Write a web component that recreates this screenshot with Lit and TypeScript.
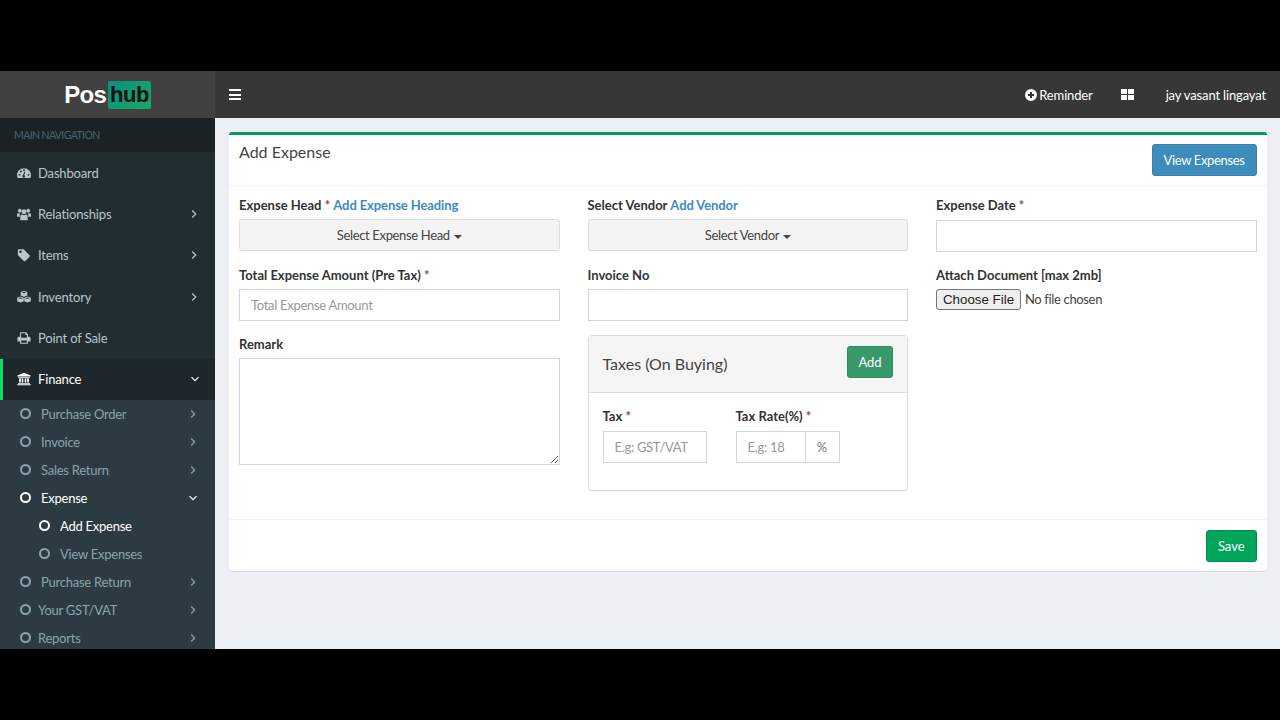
import { LitElement, html, css, svg } from "lit";
import { customElement } from "lit/decorators.js";

const icons: Record<string, unknown> = {
  gauge: svg`<path fill-rule="evenodd" d="M8 2.500C3.600 2.500 0 6 0 10.400c0 1.200.3 2.300.8 3.300h14.400c.5-1 .8-2.100.8-3.300C16 6 12.400 2.500 8 2.500zM2.800 11.200a1.100 1.100 0 1 1 0-2.200 1.100 1.100 0 0 1 0 2.200zM4.500 7.300a1.100 1.100 0 1 1 0-2.200 1.100 1.100 0 0 1 0 2.200zM8 5.600a1.100 1.100 0 1 1 0-2.200 1.100 1.100 0 0 1 0 2.200zM9.300 11.800a1.600 1.600 0 1 1-2.300-1.400l1.500-4 .9.300-1.100 3.900c.5.200 1 .700 1 1.200zM13.200 11.200a1.100 1.100 0 1 1 0-2.200 1.100 1.100 0 0 1 0 2.200z"/>`,
  users: svg`<circle cx="3.200" cy="4.200" r="2.100"/><circle cx="12.800" cy="4.200" r="2.100"/><circle cx="8" cy="5.500" r="2.800"/><path d="M0 11.200V8.800c0-1 .6-1.800 1.600-1.800h2c-.4.500-.6 1.300-.6 2 0 .8.300 1.600.7 2.200H0zM16 11.200V8.800c0-1-.6-1.800-1.600-1.800h-2c.4.500.6 1.300.6 2 0 .8-.3 1.600-.7 2.200H16z"/><path d="M3.800 15v-4c0-1.500.9-2.500 2.200-2.500.6.500 1.200.8 2 .8s1.400-.3 2-.8c1.300 0 2.200 1 2.200 2.500v4H3.800z"/>`,
  tag: svg`<path fill-rule="evenodd" d="M1 2.500v5.200c0 .4.200.7.400 1l6.300 6.200c.5.500 1.300.5 1.800 0l4.800-4.800c.5-.5.500-1.300 0-1.800L8.100 2c-.3-.3-.7-.5-1-.5H2c-.6 0-1 .4-1 1zm3 3.200a1.400 1.400 0 1 1 0-2.800 1.400 1.400 0 0 1 0 2.800z"/>`,
  cubes: svg`<path fill-rule="evenodd" d="M8 .8l3.800 1.500v3.900L8 7.700 4.200 6.200V2.300L8 .8zM5.600 2.900L8 3.800l2.400-.9L8 2 5.600 2.900zM4 7.300l3.700 1.500v4L4 14.300.2 12.800v-4L4 7.300zM1.600 9.400l2.400.9 2.400-.9L4 8.500l-2.400.9zM12 7.300l3.800 1.500v4L12 14.300l-3.700-1.500v-4L12 7.300zM9.600 9.400l2.400.9 2.400-.9-2.400-.9-2.400.9z"/>`,
  print: svg`<path fill-rule="evenodd" d="M3.500 1.500h6.800l2.200 2.200v2.800h1.300c.9 0 1.700.7 1.700 1.600v4h-3v2.400h-9v-2.400H.5v-4c0-.9.800-1.600 1.700-1.600h1.300v-5zm1.200 1.200v5h6.600V4.700H9.500V2.700H4.700zM4.700 10.900v2.400h6.600v-2.400H4.700z"/>`,
  bank: svg`<path d="M8 .8L15.600 4v1H.4V4L8 .8zM1.400 5.600h13.200v.9H1.400zM2.400 7h2v5h-2zM5.400 7h1.800v5H5.400zM8.800 7h1.800v5H8.800zM11.600 7h2v5h-2zM1.200 12.500h13.600v1H1.200zM.3 14h15.400v1.200H.3z"/>`,
};

const icon = (name: string) =>
  html`<svg class="ico" viewBox="0 0 16 16" fill="currentColor">${icons[name]}</svg>`;

const chevron = (open: boolean) =>
  html`<svg class="chev" viewBox="0 0 10 10" fill="none" stroke="currentColor" stroke-width="1.200">
    <path d=${open ? "M1.500 3.200L5 6.700l3.500-3.500" : "M3.200 1.500L6.700 5 3.200 8.500"}></path>
  </svg>`;

const req = html`<span class="req">*</span>`;

@customElement("app-root")
export class AppRoot extends LitElement {
  static styles = css`
    :host {
      display: block;
      width: 1280px;
      height: 720px;
      background: #000;
      padding: 71px 0;
      box-sizing: border-box;
      font-family: "Lato", "Liberation Sans", sans-serif;
      font-size: 13px;
      color: #333;
    }
    .app {
      height: 578px;
      overflow: hidden;
      display: grid;
      grid-template-columns: 215px 1fr;
      grid-template-rows: 47px 1fr;
      background: #ecf0f5;
    }

    .logo {
      background: #414141;
      display: flex;
      align-items: center;
      justify-content: center;
      gap: 2px;
      font-family: "Liberation Sans", sans-serif;
      font-weight: 700;
      font-size: 24px;
      letter-spacing: -0.7px;
      color: #fff;
    }
    .logo b {
      display: block;
      background: linear-gradient(135deg, #0b8f80, #17a866);
      color: #111;
      border-radius: 2px;
      padding: 0 2px;
      height: 28px;
      line-height: 27px;
      font-size: 22px;
      letter-spacing: -0.5px;
    }
    .topbar {
      background: #373737;
      display: flex;
      align-items: center;
      padding: 0 14px;
      color: #fff;
      font-size: 13px;
      letter-spacing: -0.15px;
    }
    .burger {
      width: 12px;
      height: 11px;
      margin-right: auto;
      border-top: 2px solid #fff;
      border-bottom: 2px solid #fff;
      box-sizing: border-box;
      display: flex;
      align-items: center;
    }
    .burger i {
      display: block;
      width: 100%;
      height: 2px;
      background: #fff;
    }
    .reminder {
      display: flex;
      align-items: center;
      gap: 2px;
    }
    .reminder svg {
      width: 12px;
      height: 12px;
    }
    .tiles {
      width: 13px;
      height: 11px;
      margin: 0 32px 0 28px;
      fill: #fff;
    }

    .side {
      background: #222d32;
      color: #b8c7ce;
      letter-spacing: -0.15px;
    }
    .side-head {
      height: 34px;
      line-height: 34px;
      padding-left: 14px;
      background: #1a2226;
      color: #4b646f;
      font-size: 10.5px;
      letter-spacing: -0.6px;
    }
    .item {
      height: 41.33px;
      display: flex;
      align-items: center;
      padding: 0 16px 0 17px;
      box-sizing: border-box;
    }
    .item .label {
      margin-left: 7px;
      flex: 1;
    }
    .item.active {
      background: #1e282c;
      color: #fff;
      border-left: 3px solid #0fdc63;
      padding-left: 14px;
      padding-right: 15px;
    }
    .ico {
      width: 14px;
      height: 14px;
      flex: none;
    }
    .chev {
      width: 10px;
      height: 10px;
      flex: none;
    }
    .sub {
      background: #2c3b41;
      color: #8aa4af;
      letter-spacing: -0.25px;
    }
    .sub-item {
      height: 28px;
      display: flex;
      align-items: center;
      padding: 0 17px 0 20px;
      box-sizing: border-box;
    }
    .sub-item.deep {
      padding-left: 39px;
    }
    .sub-item.on {
      color: #fff;
    }
    .ring {
      width: 11px;
      height: 11px;
      border: 2px solid currentColor;
      border-radius: 50%;
      box-sizing: border-box;
      flex: none;
      margin-right: 10px;
    }
    .sub-item.tight .ring {
      margin-right: 7px;
    }
    .sub-item span.t {
      flex: 1;
    }

    .content {
      padding: 14px 13.5px 0 14px;
    }
    .box {
      background: #fff;
      border-top: 3px solid #069a60;
      border-radius: 3px;
      box-shadow: 0 1px 1px rgba(0, 0, 0, 0.1);
      height: 439px;
      box-sizing: border-box;
    }
    .box-head {
      height: 51px;
      box-sizing: border-box;
      display: flex;
      justify-content: space-between;
      align-items: flex-start;
      padding: 9px 10px 0;
      border-bottom: 1px solid #f4f4f4;
    }
    .box-head h3 {
      margin: 0;
      font-size: 16px;
      font-weight: 400;
      line-height: 16px;
      color: #444;
    }
    .btn {
      border: 1px solid transparent;
      border-radius: 3px;
      color: #fff;
      font: inherit;
      padding: 0;
    }
    .view {
      width: 105px;
      height: 32px;
      background: #3c8dbc;
      border-color: #367fa9;
      letter-spacing: -0.35px;
    }
    .form {
      height: 334px;
      box-sizing: border-box;
      padding: 11px 10px 0;
      display: grid;
      grid-template-columns: 320.5px 320.5px 320.5px;
      column-gap: 28px;
      border-bottom: 1px solid #f4f4f4;
    }
    .col {
      display: flex;
      flex-direction: column;
    }
    label {
      display: block;
      font-weight: 700;
      line-height: 16px;
      height: 16px;
      margin-bottom: 6px;
      color: #333;
      white-space: nowrap;
    }
    .req {
      color: #a94442;
    }
    a {
      color: #3c8dbc;
      text-decoration: none;
      letter-spacing: -0.1px;
    }
    .drop {
      height: 32px;
      margin-bottom: 16px;
      background: #f4f4f4;
      border: 1px solid #ddd;
      border-radius: 3px;
      color: #444;
      font: inherit;
      letter-spacing: -0.35px;
      padding: 0;
    }
    .caret {
      display: inline-block;
      margin-left: 1px;
      vertical-align: middle;
      border-top: 4px solid #444;
      border-left: 4px solid transparent;
      border-right: 4px solid transparent;
    }
    input[type="text"],
    textarea {
      display: block;
      width: 100%;
      box-sizing: border-box;
      border: 1px solid #d2d6de;
      background: #fff;
      font: inherit;
      letter-spacing: -0.3px;
      color: #555;
      padding: 6px 11px;
      margin: 0;
      outline: none;
      border-radius: 0;
    }
    input[type="text"] {
      height: 32px;
    }
    input::placeholder {
      color: #999;
    }
    input.mb[type="text"] {
      margin-bottom: 15px;
    }
    input.date[type="text"] {
      margin: 1px 0 15px;
    }
    textarea {
      height: 107px;
    }
    .file {
      font: inherit;
      letter-spacing: -0.35px;
      color: #444;
      height: 22px;
      padding: 0;
    }
    .file::file-selector-button {
      font-family: "Liberation Sans", sans-serif;
      font-size: 13.33px;
      letter-spacing: 0;
      height: 21px;
      width: 85px;
      padding: 0;
      margin-right: 4px;
      background: #efefef;
      border: 1px solid #767676;
      border-radius: 3px;
      color: #222;
    }
    .panel {
      height: 156px;
      margin-top: -1px;
      border: 1px solid #ddd;
      border-radius: 4px;
      box-sizing: border-box;
      box-shadow: 0 1px 1px rgba(0, 0, 0, 0.05);
    }
    .panel-head {
      height: 57px;
      box-sizing: border-box;
      background: #f5f5f5;
      border-bottom: 1px solid #ddd;
      display: flex;
      align-items: center;
      justify-content: space-between;
      padding: 0 14px;
      font-size: 16px;
      color: #444;
    }
    .panel-head span {
      margin-bottom: 2px;
    }
    .add {
      width: 46px;
      height: 32px;
      margin-bottom: 5px;
      background: #38996b;
      border-color: #2f8a5f;
      font-size: 13px;
    }
    .panel-body {
      display: flex;
      gap: 29px;
      padding: 15px 14px 0;
    }
    .panel-body label {
      margin-bottom: 7px;
    }
    input.tax[type="text"] {
      width: 104px;
    }
    .group {
      display: flex;
    }
    input.rate[type="text"] {
      width: 70px;
    }
    .addon {
      width: 34px;
      height: 32px;
      box-sizing: border-box;
      border: 1px solid #d2d6de;
      border-left: 0;
      display: flex;
      align-items: center;
      justify-content: center;
      color: #777;
    }
    .foot {
      display: flex;
      justify-content: flex-end;
      padding: 10px 10px 0;
    }
    .save {
      width: 50.5px;
      height: 32px;
      background: #00a65a;
      border-color: #008d4c;
    }
  `;

  private main = [
    ["gauge", "Dashboard", false],
    ["users", "Relationships", true],
    ["tag", "Items", true],
    ["cubes", "Inventory", true],
    ["print", "Point of Sale", false],
  ] as const;

  private subTop = ["Purchase Order", "Invoice", "Sales Return"];

  private sub(label: string) {
    return html`<div class="sub-item">
      <i class="ring"></i><span class="t">${label}</span>${chevron(false)}
    </div>`;
  }

  render() {
    return html`
      <div class="app">
        <div class="logo"><span>Pos</span><b>hub</b></div>
        <div class="topbar">
          <div class="burger"><i></i></div>
          <div class="reminder">
            <svg viewBox="0 0 12 12">
              <path fill="#fff" fill-rule="evenodd" d="M6 0a6 6 0 1 1 0 12A6 6 0 0 1 6 0zM5 3v2H3v2h2v2h2V7h2V5H7V3H5z"></path>
            </svg>
            Reminder
          </div>
          <svg class="tiles" viewBox="0 0 13 11">
            <rect width="6" height="5"></rect>
            <rect x="7" width="6" height="5"></rect>
            <rect y="6" width="6" height="5"></rect>
            <rect x="7" y="6" width="6" height="5"></rect>
          </svg>
          <span>jay vasant lingayat</span>
        </div>

        <aside class="side">
          <div class="side-head">MAIN NAVIGATION</div>
          ${this.main.map(
            ([ic, label, more]) => html`<div class="item">
              ${icon(ic)}<span class="label">${label}</span>${more ? chevron(false) : ""}
            </div>`
          )}
          <div class="item active">
            ${icon("bank")}<span class="label">Finance</span>${chevron(true)}
          </div>
          <div class="sub">
            ${this.subTop.map((s) => this.sub(s))}
            <div class="sub-item on">
              <i class="ring"></i><span class="t">Expense</span>${chevron(true)}
            </div>
            <div class="sub-item deep on"><i class="ring"></i><span class="t">Add Expense</span></div>
            <div class="sub-item deep"><i class="ring"></i><span class="t">View Expenses</span></div>
            ${this.sub("Purchase Return")}
            <div class="sub-item tight">
              <i class="ring"></i><span class="t">Your GST/VAT</span>${chevron(false)}
            </div>
            <div class="sub-item tight">
              <i class="ring"></i><span class="t">Reports</span>${chevron(false)}
            </div>
          </div>
        </aside>

        <main class="content">
          <section class="box">
            <div class="box-head">
              <h3>Add Expense</h3>
              <button class="btn view">View Expenses</button>
            </div>
            <div class="form">
              <div class="col">
                <label>Expense Head ${req} <a>Add Expense Heading</a></label>
                <button class="drop">Select Expense Head <span class="caret"></span></button>
                <label>Total Expense Amount (Pre Tax) ${req}</label>
                <input class="mb" type="text" placeholder="Total Expense Amount" />
                <label>Remark</label>
                <textarea></textarea>
              </div>
              <div class="col">
                <label>Select Vendor <a>Add Vendor</a></label>
                <button class="drop">Select Vendor <span class="caret"></span></button>
                <label>Invoice No</label>
                <input class="mb" type="text" />
                <div class="panel">
                  <div class="panel-head">
                    <span>Taxes (On Buying)</span>
                    <button class="btn add">Add</button>
                  </div>
                  <div class="panel-body">
                    <div>
                      <label>Tax ${req}</label>
                      <input class="tax" type="text" placeholder="E.g: GST/VAT" />
                    </div>
                    <div>
                      <label>Tax Rate(%) ${req}</label>
                      <div class="group">
                        <input class="rate" type="text" placeholder="E.g: 18" />
                        <span class="addon">%</span>
                      </div>
                    </div>
                  </div>
                </div>
              </div>
              <div class="col">
                <label>Expense Date ${req}</label>
                <input class="date" type="text" />
                <label>Attach Document [max 2mb]</label>
                <input class="file" type="file" />
              </div>
            </div>
            <div class="foot"><button class="btn save">Save</button></div>
          </section>
        </main>
      </div>
    `;
  }
}
